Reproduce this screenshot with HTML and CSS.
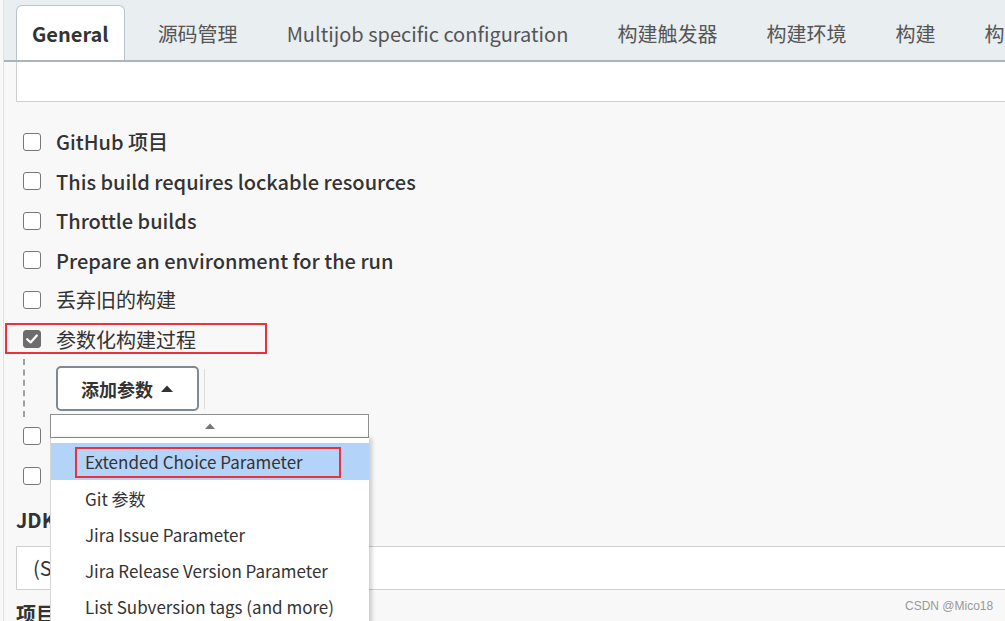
FILE: index.html
```html
<!DOCTYPE html>
<html lang="zh-CN">
<head>
  <meta charset="utf-8" />
  <title>配置 - General</title>
  <link rel="stylesheet" href="styles.css">
</head>

<body>
  <div class="page">
    <!-- 标签栏 -->
    <nav class="tabbar">
      <a href="#" class="tab active">General</a>
      <a href="#" class="tab">源码管理</a>
      <a href="#" class="tab">Multijob specific configuration</a>
      <a href="#" class="tab">构建触发器</a>
      <a href="#" class="tab">构建环境</a>
      <a href="#" class="tab">构建</a>
      <a href="#" class="tab">构建后操作</a>
    </nav>

    <div class="desc-box"></div>

    <!-- 选项区 -->
    <section class="options">
      <div class="opt"><span class="cb"></span><span class="opt-label strong">GitHub 项目</span></div>
      <div class="opt"><span class="cb"></span><span class="opt-label strong">This build requires lockable resources</span></div>
      <div class="opt"><span class="cb"></span><span class="opt-label strong">Throttle builds</span></div>
      <div class="opt"><span class="cb"></span><span class="opt-label strong">Prepare an environment for the run</span></div>
      <div class="opt"><span class="cb"></span><span class="opt-label">丢弃旧的构建</span></div>
      <div class="opt">
        <span class="cb on">
          <svg width="18" height="18" viewBox="0 0 18 18"><path d="M4.2 9.2 L7.6 12.4 L13.8 5.4" fill="none" stroke="#fff" stroke-width="2.2" stroke-linecap="round" stroke-linejoin="round"/></svg>
        </span>
        <span class="opt-label">参数化构建过程</span>
        <span class="mark mark-row"></span>
      </div>

      <div class="nested">
        <div class="btn-group">
          <button class="btn">添加参数
            <svg width="12" height="7" viewBox="0 0 12 7"><polygon points="0,7 6,0.5 12,7" fill="#333"/></svg>
          </button>
          <span class="sep"></span>
        </div>

        <!-- 下拉菜单 -->
        <div class="menu">
          <div class="menu-head">
            <svg width="10" height="6" viewBox="0 0 10 6"><polygon points="0,6 5,0.5 10,6" fill="#777"/></svg>
          </div>
          <ul class="menu-list">
            <li class="item selected">Extended Choice Parameter<span class="mark mark-item"></span></li>
            <li class="item">Git 参数</li>
            <li class="item">Jira Issue Parameter</li>
            <li class="item">Jira Release Version Parameter</li>
            <li class="item">List Subversion tags (and more)</li>
          </ul>
        </div>
      </div>

      <div class="opt"><span class="cb"></span><span class="opt-label">关闭构建</span></div>
      <div class="opt"><span class="cb"></span><span class="opt-label">在必要的时候并发构建</span></div>

      <div class="field-label">JDK</div>
      <div class="input">(System)</div>
      <div class="field-label">项目名称</div>
    </section>

    <div class="watermark">CSDN @Mico18</div>
  </div>
</body>
</html>
```

FILE: styles.css
```css
* {
  margin: 0;
  padding: 0;
  box-sizing: border-box;
}

body {
  overflow: hidden;
  height: 100vh;
  background-color: #f8f8f8;
  font-family: "Noto Sans CJK SC", "Noto Sans", sans-serif;
  color: #333;
}

.page {
  position: relative;
  width: 1040px;
  height: 100vh;
  margin-left: 3px;
  border-left: 1px solid #e2e2e2;
}

/* 标签栏 */
.tabbar {
  display: flex;
  gap: 17px;
  height: 62px;
  padding: 5px 0 0 12px;
  background-color: #e9eef1;
  border-bottom: 2px solid #a9b5be;
  white-space: nowrap;
}
.tab {
  display: flex;
  align-items: center;
  padding: 0 15px;
  font-size: 20px;
  color: #555;
  text-decoration: none;
  border: 1px solid transparent;
  border-bottom: none;
  border-radius: 6px 6px 0 0;
}
.tab.active {
  background-color: #fff;
  border-color: #b9c4cc;
  color: #333;
  font-weight: 700;
}

.desc-box {
  height: 40px;
  margin-left: 12px;
  background-color: #fff;
  border-left: 1px solid #cfcfcf;
  border-bottom: 1px solid #cfcfcf;
}

/* 选项区 */
.options {
  padding: 20px 0 0 12px;
}
.opt {
  position: relative;
  display: flex;
  align-items: center;
  gap: 15px;
  height: 39.5px;
  padding-left: 7px;
}
.cb {
  width: 18px;
  height: 18px;
  background-color: #fff;
  border: 1.5px solid #777;
  border-radius: 3px;
}
.cb.on {
  background-color: #6d6d6d;
  border-color: #6d6d6d;
  display: flex;
  align-items: center;
  justify-content: center;
}
.cb.on svg {
  flex: none;
}
.opt-label {
  font-size: 20px;
  white-space: nowrap;
}
.opt-label.strong {
  font-weight: 500;
}

/* 红色标注框 */
.mark {
  position: absolute;
  border: 2px solid #e8323c;
  pointer-events: none;
}
.mark-row {
  left: -11px;
  top: 3.5px;
  width: 262px;
  height: 31px;
}
.mark-item {
  left: 24px;
  top: 4px;
  width: 266px;
  height: 31px;
}

/* 添加参数 */
.nested {
  position: relative;
  margin-left: 7px;
  padding: 7px 0 5.5px 31px;
  border-left: 2px dashed #a0a0a0;
}
.btn-group {
  display: flex;
  align-items: center;
  gap: 5px;
}
.btn {
  display: flex;
  align-items: center;
  gap: 8px;
  width: 143px;
  height: 45px;
  padding-left: 23px;
  background-color: #fff;
  border: 2px solid #7d8a93;
  border-radius: 5px;
  font-family: inherit;
  font-size: 18px;
  font-weight: 700;
  color: #333;
}
.sep {
  width: 1px;
  height: 40px;
  background-color: #dcdcdc;
}

/* 下拉菜单 */
.menu {
  position: absolute;
  left: 25px;
  top: 55px;
  width: 319px;
  z-index: 2;
}
.menu-head {
  display: flex;
  align-items: center;
  justify-content: center;
  height: 24px;
  background-color: #fff;
  border: 1px solid #8f8f8f;
}
.menu-list {
  list-style: none;
  padding-top: 5px;
  height: 200px;
  background-color: #fff;
  border-left: 1px solid #d6d6d6;
  box-shadow: 3px 0 4px rgba(0, 0, 0, 0.18);
}
.item {
  position: relative;
  display: flex;
  align-items: center;
  height: 36px;
  padding-left: 34px;
  font-size: 17px;
  color: #333;
  white-space: nowrap;
}
.item.selected {
  height: 37px;
  background-color: #b4d3f8;
}

/* 下方字段 */
.field-label {
  margin-top: 10px;
  line-height: 28px;
  font-size: 20px;
  font-weight: 700;
}
.input {
  display: flex;
  align-items: center;
  height: 44px;
  margin: 12px 0 0 0;
  padding-left: 16px;
  background-color: #fff;
  border: 1px solid #d0d0d0;
  font-size: 20px;
  color: #333;
}

.watermark {
  position: absolute;
  left: 901px;
  top: 599px;
  font-family: "Liberation Sans", sans-serif;
  font-size: 12px;
  color: #999;
}
```
